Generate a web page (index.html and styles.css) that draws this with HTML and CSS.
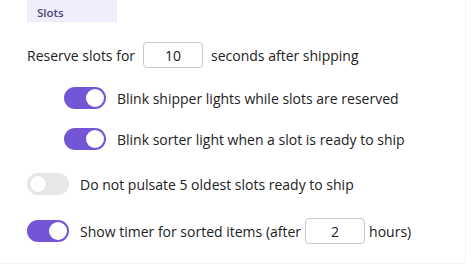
FILE: index.html
```html
<!DOCTYPE html>
<html>
<head>
<meta charset="utf-8">
<link rel="stylesheet" href="styles.css">
</head>
<body>
<div class="card">
  <div class="tab">Slots</div>
  <div class="row first">
    <span>Reserve slots for</span>
    <span class="num">10</span>
    <span>seconds after shipping</span>
  </div>
  <div class="row sub r2">
    <span class="toggle on"><span class="knob"></span></span>
    <span>Blink shipper lights while slots are reserved</span>
  </div>
  <div class="row sub r3">
    <span class="toggle on"><span class="knob"></span></span>
    <span>Blink sorter light when a slot is ready to ship</span>
  </div>
  <div class="row r4">
    <span class="toggle"><span class="knob"></span></span>
    <span>Do not pulsate 5 oldest slots ready to ship</span>
  </div>
  <div class="row r5">
    <span class="toggle on"><span class="knob"></span></span>
    <span class="label">Show timer for sorted items (after</span>
    <span class="num">2</span>
    <span class="label">hours)</span>
  </div>
</div>
</body>
</html>
```
FILE: styles.css
```css
html, body {
  margin: 0;
  padding: 0;
  background: #ffffff;
}
body {
  font-family: "Open Sans", "Noto Sans", sans-serif;
  font-size: 14px;
  color: #222222;
}
.card {
  width: 466px;
  height: 264px;
  border-right: 1px solid #f4f2f6;
  border-bottom: 1px solid #f4f2f6;
  padding-left: 27px;
  box-sizing: border-box;
}
.tab {
  width: 90px;
  height: 22px;
  box-sizing: border-box;
  background: #eeedfc;
  color: #4a4872;
  font-size: 11.5px;
  font-weight: 600;
  padding-left: 10px;
  line-height: 25px;
}
.row {
  display: flex;
  align-items: center;
  gap: 8px;
}
.row.first {
  margin-top: 20px;
  height: 26px;
}
.sub {
  padding-left: 37px;
}
.r2 { margin-top: 19px; height: 22px; }
.r3 { margin-top: 19px; height: 22px; }
.r4 { margin-top: 23px; height: 22px; }
.r5 { margin-top: 23px; height: 26px; gap: 4px; }
.r5 .toggle { margin-right: 7px; }
.num {
  display: inline-flex;
  align-items: center;
  justify-content: center;
  width: 60px;
  height: 26px;
  box-sizing: border-box;
  border: 1px solid #c8c8cc;
  border-radius: 4px;
  background: #fff;
}
.toggle {
  position: relative;
  width: 42px;
  height: 22px;
  border-radius: 11px;
  background: #e7e7ea;
  flex: none;
  margin-right: 3px;
}
.toggle .knob {
  position: absolute;
  left: 2px;
  top: 2px;
  width: 18px;
  height: 18px;
  box-sizing: border-box;
  border-radius: 50%;
  background: #ffffff;
  border: 1px solid #dedee2;
}
.toggle.on {
  background: #7355d5;
}
.toggle.on .knob {
  left: 22px;
  border: none;
}
```
